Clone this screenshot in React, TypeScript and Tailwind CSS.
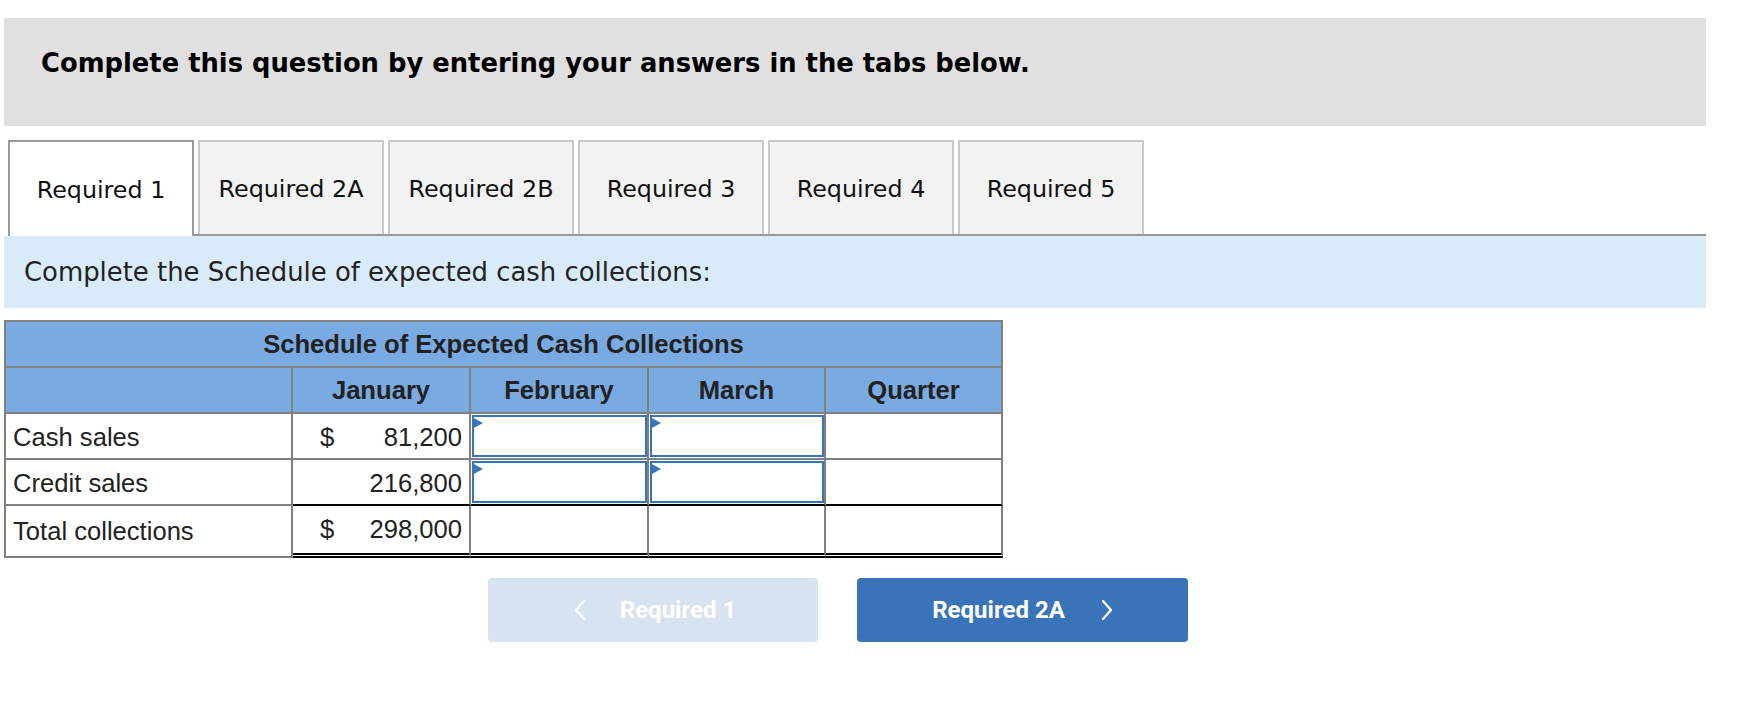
import React from "react"

const tabs = ["Required 2A", "Required 2B", "Required 3", "Required 4", "Required 5"]

function Flag() {
  return (
    <span className="absolute left-[-2px] top-[0px] w-0 h-0 border-l-[11px] border-l-[#3a75b9] border-y-[6px] border-y-transparent" />
  )
}

function InputCell({ bottom }: { bottom: string }) {
  return (
    <div className={`h-full border-r-2 border-r-[#808080] border-b-2 ${bottom} pt-[1px] pb-[1px] pl-[1px] bg-white`}>
      <div className="relative h-full border-2 border-[#3a73b8]">
        <Flag />
      </div>
    </div>
  )
}

function ChevronLeft() {
  return (
    <svg width="12" height="22" viewBox="0 0 12 22" fill="none">
      <polyline points="10,2 2,11 10,20" stroke="currentColor" strokeWidth="2.2" strokeLinecap="round" strokeLinejoin="round" />
    </svg>
  )
}

function ChevronRight() {
  return (
    <svg width="12" height="22" viewBox="0 0 12 22" fill="none">
      <polyline points="2,2 10,11 2,20" stroke="currentColor" strokeWidth="2.2" strokeLinecap="round" strokeLinejoin="round" />
    </svg>
  )
}

export default function App() {
  const cell = "border-r-2 border-b-2 border-[#808080]"
  return (
    <div className="w-[1744px] h-[704px] bg-white pt-[18px]">
      <div className="ml-[4px] w-[1702px]">
        {/* banner */}
        <div className="h-[108px] bg-[#e0e0e0] pl-[37px] pt-[30px] text-[25.8px] leading-[30px] font-bold text-black font-['DejaVu_Sans',sans-serif]">
          Complete this question by entering your answers in the tabs below.
        </div>

        {/* tabs */}
        <div className="mt-[14px] flex items-end h-[96px] font-['DejaVu_Sans',sans-serif] text-[23.8px] text-[#111]">
          <div className="w-[4px]" />
          <div className="w-[186px] h-[96px] border-2 border-b-0 border-[#999999] bg-white flex items-center justify-center pt-[3px]">
            Required 1
          </div>
          <div className="flex-1 h-[96px] flex items-end gap-[4px] pl-[4px] border-b-2 border-[#999999]">
            {tabs.map(t => (
              <div key={t} className="w-[186px] h-[94px] border-2 border-b-0 border-[#c8c8c8] bg-[#f2f2f2] flex items-center justify-center pt-[3px]">
                {t}
              </div>
            ))}
          </div>
        </div>

        {/* instruction */}
        <div className="h-[72px] bg-[#d9ebf9] pl-[20px] flex items-center text-[25.9px] text-[#222] font-['DejaVu_Sans',sans-serif]">
          Complete the Schedule of expected cash collections:
        </div>

        {/* table */}
        <div className="mt-[12px] w-[999px] border-l-2 border-t-2 border-[#808080] font-['Liberation_Sans',Arial,sans-serif] text-[25.6px] text-[#222]">
          <div className={`h-[46px] bg-[#79abe2] ${cell} flex items-center justify-center font-bold pt-[1px]`}>
            Schedule of Expected Cash Collections
          </div>
          <div className="grid grid-cols-[287px_178px_178px_177px_177px] h-[46px] bg-[#79abe2] font-bold">
            <div className={cell} />
            {["January", "February", "March", "Quarter"].map(m => (
              <div key={m} className={`${cell} flex items-center justify-center pt-[1px]`}>{m}</div>
            ))}
          </div>

          {/* cash sales */}
          <div className="grid grid-cols-[287px_178px_178px_177px_177px] h-[46px]">
            <div className={`${cell} flex items-center pl-[7px] pt-[2px]`}>Cash sales</div>
            <div className={`${cell} flex items-center justify-between pl-[27px] pr-[7px] pt-[2px]`}>
              <span>$</span>
              <span>81,200</span>
            </div>
            <InputCell bottom="border-b-[#808080]" />
            <InputCell bottom="border-b-[#808080]" />
            <div className={cell} />
          </div>

          {/* credit sales */}
          <div className="grid grid-cols-[287px_178px_178px_177px_177px] h-[46px]">
            <div className={`${cell} flex items-center pl-[7px] pt-[2px]`}>Credit sales</div>
            <div className="border-r-2 border-r-[#808080] border-b-2 border-b-black flex items-center justify-end pr-[7px] pt-[2px]">
              216,800
            </div>
            <InputCell bottom="border-b-black" />
            <InputCell bottom="border-b-black" />
            <div className="border-r-2 border-r-[#808080] border-b-2 border-b-black" />
          </div>

          {/* total */}
          <div className="grid grid-cols-[287px_178px_178px_177px_177px] h-[52px]">
            <div className={`${cell} flex items-center pl-[7px]`}>Total collections</div>
            <div className="border-r-2 border-r-[#808080] border-b-[5px] [border-bottom-style:double] border-b-black flex items-center justify-between pl-[27px] pr-[7px]">
              <span>$</span>
              <span>298,000</span>
            </div>
            <div className="border-r-2 border-r-[#808080] border-b-[5px] [border-bottom-style:double] border-b-black" />
            <div className="border-r-2 border-r-[#808080] border-b-[5px] [border-bottom-style:double] border-b-black" />
            <div className="border-r-2 border-r-[#808080] border-b-[5px] [border-bottom-style:double] border-b-black" />
          </div>
        </div>

        {/* nav buttons */}
        <div className="mt-[20px] flex gap-[39px] pl-[484px] font-['Roboto',sans-serif] font-bold text-[24px] text-white">
          <div className="w-[330px] h-[64px] rounded-[4px] bg-[#d7e3f1] flex items-center justify-center gap-[34px] pl-[4px]">
            <ChevronLeft />
            <span>Required 1</span>
          </div>
          <div className="w-[331px] h-[64px] rounded-[4px] bg-[#3874b7] flex items-center justify-center gap-[36px]">
            <span>Required 2A</span>
            <ChevronRight />
          </div>
        </div>
      </div>
    </div>
  )
}
